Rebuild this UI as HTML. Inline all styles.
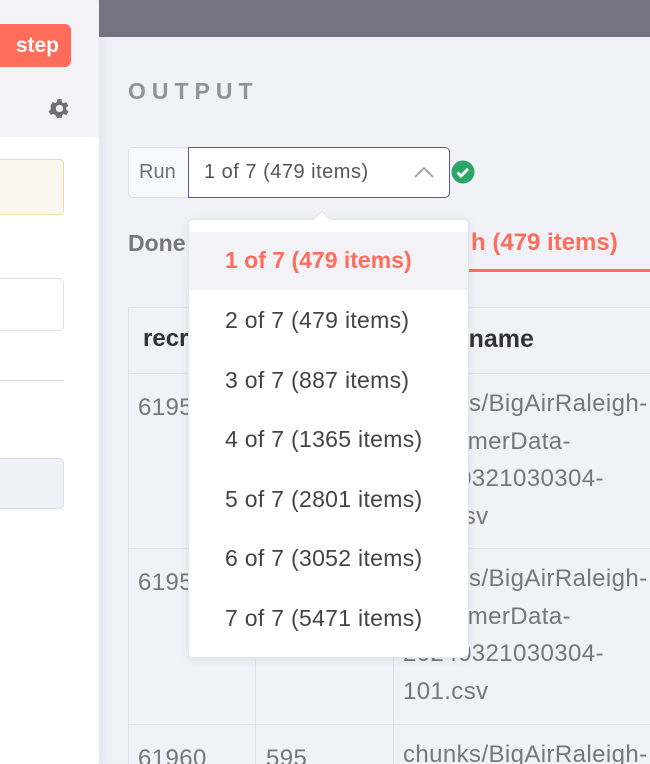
<!DOCTYPE html>
<html><head><meta charset="utf-8"><style>
*{box-sizing:border-box;margin:0;padding:0}
html,body{width:650px;height:764px;overflow:hidden}
body{background:#f0f1f7;font-family:"Liberation Sans",sans-serif;position:relative}
.abs{position:absolute}
.topbar{left:99px;top:0;width:551px;height:37px;background:#767380}
.main{left:99px;top:37px;width:551px;height:727px;background:#f1f2f8;box-shadow:inset 10px 0 10px -6px #e2e3ec}
.left{left:0;top:0;width:99px;height:764px;background:#fff;border-top-right-radius:8px;overflow:hidden}
.lhead{left:0;top:0;width:99px;height:137px;background:#f4f4f8}
.step{left:-10px;top:24px;width:81px;height:43px;background:#ff6d5a;border-radius:6px;color:#fff;font-weight:bold;font-size:21px;line-height:43px;text-align:right;padding-right:12px}
.t{white-space:nowrap}
.dd{font-size:23px;letter-spacing:.3px;color:#444}
.cell{font-size:24px;letter-spacing:.4px;color:#777;line-height:37.5px}
</style></head><body>
<div class="abs topbar"></div>
<div class="abs main"></div>
<div class="abs left">
 <div class="abs lhead"></div>
 <div class="abs step">step</div>
 <svg class="abs" style="left:47px;top:96px" width="25" height="25" viewBox="0 0 24 24"><path fill="#6e6e76" d="M19.4 13a7.5 7.5 0 0 0 0-2l2.1-1.6-2-3.5-2.5 1a7.6 7.6 0 0 0-1.7-1L15 3h-4l-.4 2.7a7.6 7.6 0 0 0-1.7 1l-2.5-1-2 3.5L4.6 11a7.5 7.5 0 0 0 0 2l-2.1 1.6 2 3.5 2.5-1a7.6 7.6 0 0 0 1.7 1L11 21h4l.4-2.7a7.6 7.6 0 0 0 1.7-1l2.5 1 2-3.5zM13 15.5a3.5 3.5 0 1 1 0-7 3.5 3.5 0 0 1 0 7z" transform="translate(-1 0)"/></svg>
 <div class="abs" style="left:-5px;top:159px;width:69px;height:56px;background:#fdf8ef;border:1px solid #f2dba8;border-radius:4px"></div>
 <div class="abs" style="left:-5px;top:278px;width:69px;height:53px;background:#fff;border:1px solid #dcdfe6;border-radius:5px"></div>
 <div class="abs" style="left:0;top:380px;width:64px;height:1px;background:#dcdfe6"></div>
 <div class="abs" style="left:-5px;top:458px;width:69px;height:51px;background:#f0f1f6;border:1px solid #dcdfe6;border-radius:5px"></div>
</div>
<div class="abs t" style="left:128px;top:78px;font-size:23px;font-weight:bold;letter-spacing:6px;color:#909399">OUTPUT</div>
<div class="abs" style="left:128px;top:147px;width:61px;height:51px;background:#f8f9fc;border:1px solid #dcdfe6;border-radius:5px 0 0 5px;color:#707076;font-size:20px;line-height:49px;padding-left:10px">Run</div>
<div class="abs t" style="left:188px;top:147px;width:262px;height:51px;background:#fff;border:1px solid #5a4fcf;border-radius:0 5px 5px 0;color:#555;font-size:20px;letter-spacing:.5px;line-height:49px;padding-left:15px">1 of 7 (479 items)</div>
<svg class="abs" style="left:412px;top:164px" width="24" height="16" viewBox="0 0 24 16"><path d="M3 13 L12 4 L21 13" fill="none" stroke="#999" stroke-width="1.6"/></svg>
<svg class="abs" style="left:451px;top:160px" width="24" height="24" viewBox="0 0 24 24"><circle cx="12" cy="12" r="11.5" fill="#29a568"/><path d="M6.5 12.5l3.5 3.5 7-7" fill="none" stroke="#fff" stroke-width="2.8"/></svg>
<div class="abs t" style="left:128px;top:230px;font-size:23px;font-weight:bold;color:#76767c">Done</div>
<div class="abs t" style="left:471px;top:229px;font-size:24px;font-weight:bold;color:#ff6d5a">h (479 items)</div>
<div class="abs" style="left:440px;top:269px;width:210px;height:3px;background:#ff6d5a"></div>
<!-- table -->
<div class="abs" style="left:128px;top:307px;width:540px;height:470px;background:#f1f2f8;border:1px solid #dde0ea"></div>
<div class="abs" style="left:128px;top:373px;width:540px;height:1px;background:#dde0ea"></div>
<div class="abs" style="left:128px;top:548px;width:540px;height:1px;background:#dde0ea"></div>
<div class="abs" style="left:128px;top:724px;width:540px;height:1px;background:#dde0ea"></div>
<div class="abs" style="left:255px;top:373px;width:1px;height:400px;background:#dde0ea"></div>
<div class="abs" style="left:393px;top:307px;width:1px;height:470px;background:#dde0ea"></div>
<div class="abs t" style="left:143px;top:325px;font-size:24px;font-weight:bold;color:#333">recr</div>
<div class="abs t" style="left:395px;top:325px;font-size:25px;font-weight:bold;color:#333">chunkname</div>
<div class="abs t cell" style="left:138px;top:389px">61959</div>
<div class="abs t cell" style="left:138px;top:564px">61959</div>
<div class="abs t cell" style="left:138px;top:740px">61960</div>
<div class="abs t cell" style="left:266px;top:740px">595</div>
<div class="abs t cell" style="left:403px;top:385px">chunks/BigAirRaleigh-<br>CustomerData-<br>20240321030304-<br>100.csv</div>
<div class="abs t cell" style="left:403px;top:560px">chunks/BigAirRaleigh-<br>CustomerData-<br>20240321030304-<br>101.csv</div>
<div class="abs t cell" style="left:403px;top:736px">chunks/BigAirRaleigh-</div>
<!-- dropdown -->
<div class="abs" style="left:188px;top:219px;width:281px;height:439px;background:#fff;border:1px solid #e4e6ee;border-radius:5px;box-shadow:0 2px 10px rgba(0,0,0,.08)"></div>
<div class="abs" style="left:316px;top:213px;width:12px;height:12px;background:#fff;transform:rotate(45deg);border-left:1px solid #e4e6ee;border-top:1px solid #e4e6ee"></div>
<div class="abs" style="left:189px;top:232px;width:279px;height:58px;background:#f3f3f7"></div>
<div class="abs t" style="left:225px;top:247px;font-size:23px;font-weight:bold;color:#ff6d5a">1 of 7 (479 items)</div>
<div class="abs t dd" style="left:225px;top:307px">2 of 7 (479 items)</div>
<div class="abs t dd" style="left:225px;top:367px">3 of 7 (887 items)</div>
<div class="abs t dd" style="left:225px;top:426px">4 of 7 (1365 items)</div>
<div class="abs t dd" style="left:225px;top:486px">5 of 7 (2801 items)</div>
<div class="abs t dd" style="left:225px;top:545px">6 of 7 (3052 items)</div>
<div class="abs t dd" style="left:225px;top:605px">7 of 7 (5471 items)</div>
</body></html>
